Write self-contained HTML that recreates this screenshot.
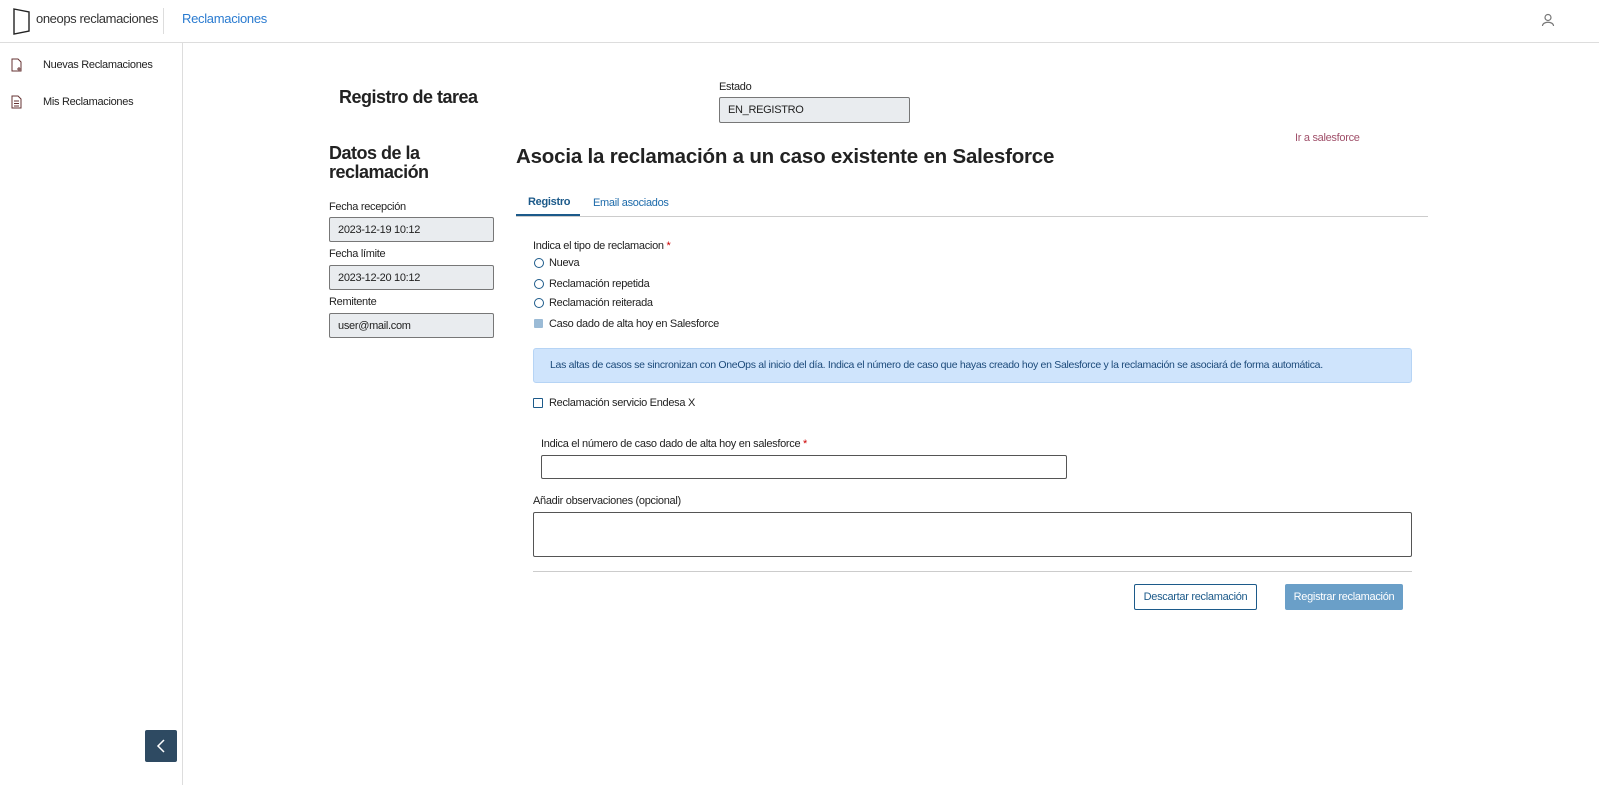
<!DOCTYPE html>
<html><head><meta charset="utf-8"><style>
*{box-sizing:border-box;margin:0;padding:0}
body{width:1599px;height:785px;overflow:hidden;background:#fff;font-family:"Liberation Sans",sans-serif;color:#222;position:relative}
.a{position:absolute;white-space:nowrap}
.f{font-size:11px;letter-spacing:-0.3px}
.inp{position:absolute;background:#e9ecef;border:1px solid #777;border-radius:2px;font-size:11px;letter-spacing:-0.3px;padding:0 8px;display:flex;align-items:center;color:#222}
.radio{position:absolute;width:10px;height:10px;border:1.3px solid #1c5a8a;border-radius:50%}
</style></head><body>
<div class="a" style="left:0;top:42px;width:1599px;height:1px;background:#ddd"></div>
<div class="a" style="left:182px;top:43px;width:1px;height:742px;background:#ddd"></div>
<div class="a" style="left:163px;top:8px;width:1px;height:26px;background:#ddd"></div>
<svg class="a" style="left:13px;top:8px" width="18" height="27"><path d="M1 1 L16 4 L16 23 L1 26 Z" fill="none" stroke="#222" stroke-width="1.4"/></svg>
<div class="a" style="left:36px;top:11px;font-size:13px;letter-spacing:-0.4px;color:#333">oneops reclamaciones</div>
<div class="a" style="left:182px;top:11px;font-size:13px;letter-spacing:-0.3px;color:#2a7bd0">Reclamaciones</div>
<svg class="a" style="left:1541px;top:13px" width="14" height="14"><circle cx="7" cy="4.5" r="3" fill="none" stroke="#777" stroke-width="1.2"/><path d="M1.5 13 C1.5 8 12.5 8 12.5 13" fill="none" stroke="#777" stroke-width="1.2"/></svg>
<svg class="a" style="left:11px;top:58px" width="12" height="14"><path d="M1 1 H7 L10 4 V13 H1 Z" fill="none" stroke="#633" stroke-width="1"/><path d="M8 9 V13 M6 11 H10" stroke="#633"/></svg>
<div class="a f" style="left:43px;top:59px">Nuevas Reclamaciones</div>
<svg class="a" style="left:11px;top:95px" width="12" height="14"><path d="M1 1 H7 L10 4 V13 H1 Z M3 6 H8 M3 8.5 H8 M3 11 H8" fill="none" stroke="#633" stroke-width="1"/></svg>
<div class="a f" style="left:43px;top:96px">Mis Reclamaciones</div>
<div class="a" style="left:145px;top:730px;width:32px;height:32px;background:#2e4a62;border-radius:2px"></div>
<svg class="a" style="left:145px;top:730px" width="32" height="32"><path d="M19 10 L13 16 L19 22" fill="none" stroke="#fff" stroke-width="1.5"/></svg>

<div class="a" style="left:339px;top:87px;font-size:18px;font-weight:bold;letter-spacing:-0.5px">Registro de tarea</div>
<div class="a f" style="left:719px;top:81px">Estado</div>
<div class="inp" style="left:719px;top:97px;width:191px;height:26px">EN_REGISTRO</div>
<div class="a f" style="left:1295px;top:132px;color:#a0506a">Ir a salesforce</div>
<div class="a" style="left:329px;top:144px;font-size:18px;font-weight:bold;line-height:19px;letter-spacing:-0.5px">Datos de la<br>reclamación</div>
<div class="a f" style="left:329px;top:201px">Fecha recepción</div>
<div class="inp" style="left:329px;top:217px;width:165px;height:25px">2023-12-19 10:12</div>
<div class="a f" style="left:329px;top:248px">Fecha límite</div>
<div class="inp" style="left:329px;top:265px;width:165px;height:25px">2023-12-20 10:12</div>
<div class="a f" style="left:329px;top:296px">Remitente</div>
<div class="inp" style="left:329px;top:313px;width:165px;height:25px">user@mail.com</div>

<div class="a" style="left:516px;top:145px;font-size:20.5px;font-weight:bold;letter-spacing:-0.2px">Asocia la reclamación a un caso existente en Salesforce</div>
<div class="a f" style="left:528px;top:196px;color:#1c5a8a;font-weight:bold">Registro</div>
<div class="a f" style="left:593px;top:197px;color:#1c6aaa">Email asociados</div>
<div class="a" style="left:516px;top:216px;width:912px;height:1px;background:#ccc"></div>
<div class="a" style="left:516px;top:214px;width:64px;height:2px;background:#1c5a8a"></div>

<div class="a f" style="left:533px;top:240px">Indica el tipo de reclamacion <span style="color:#c00">*</span></div>
<div class="radio" style="left:534px;top:258px"></div><div class="a f" style="left:549px;top:257px">Nueva</div>
<div class="radio" style="left:534px;top:279px"></div><div class="a f" style="left:549px;top:278px">Reclamación repetida</div>
<div class="radio" style="left:534px;top:298px"></div><div class="a f" style="left:549px;top:297px">Reclamación reiterada</div>
<div class="a" style="left:534px;top:319px;width:9px;height:9px;background:#9bbbd6;border-radius:1px"></div><div class="a f" style="left:549px;top:318px">Caso dado de alta hoy en Salesforce</div>
<div class="a" style="left:533px;top:348px;width:879px;height:35px;background:#cfe4fc;border:1px solid #b6d4f5;border-radius:3px"></div>
<div class="a f" style="left:550px;top:359px;color:#1c4a7a;font-size:10.5px">Las altas de casos se sincronizan con OneOps al inicio del día. Indica el número de caso que hayas creado hoy en Salesforce y la reclamación se asociará de forma automática.</div>
<div class="a" style="left:533px;top:398px;width:10px;height:10px;border:1.3px solid #1c5a8a;border-radius:1px"></div><div class="a f" style="left:549px;top:397px">Reclamación servicio Endesa X</div>
<div class="a f" style="left:541px;top:438px">Indica el número de caso dado de alta hoy en salesforce <span style="color:#c00">*</span></div>
<div class="a" style="left:541px;top:455px;width:526px;height:24px;border:1px solid #555;border-radius:2px"></div>
<div class="a f" style="left:533px;top:495px">Añadir observaciones (opcional)</div>
<div class="a" style="left:533px;top:512px;width:879px;height:45px;border:1px solid #555;border-radius:2px"></div>
<div class="a" style="left:533px;top:571px;width:879px;height:1px;background:#ccc"></div>
<div class="a f" style="left:1134px;top:584px;width:123px;height:26px;border:1px solid #1c5a8a;border-radius:2px;color:#1c5a8a;display:flex;align-items:center;justify-content:center">Descartar reclamación</div>
<div class="a f" style="left:1285px;top:584px;width:118px;height:26px;background:#6a9fc8;border-radius:2px;color:#fff;display:flex;align-items:center;justify-content:center">Registrar reclamación</div>
</body></html>
